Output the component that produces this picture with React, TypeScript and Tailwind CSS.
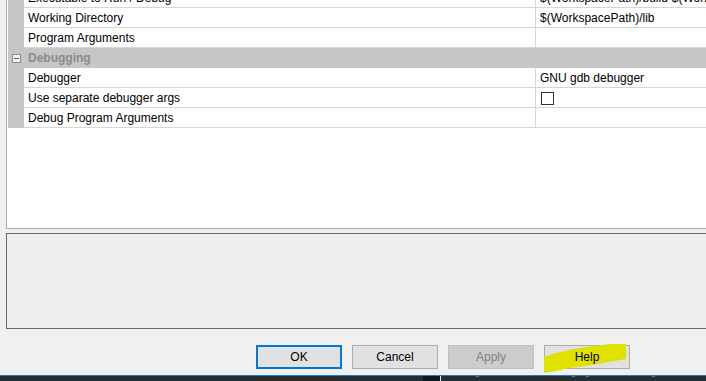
import React from 'react';

type Row =
  | { kind: 'prop'; name: string; value?: string; check?: boolean }
  | { kind: 'group'; name: string };

const rows: Row[] = [
  {
    kind: 'prop',
    name: 'Executable to Run / Debug',
    value: '$(WorkspacePath)/build-$(WorkspaceConfiguration)/bin/$(ProjectName)',
  },
  { kind: 'prop', name: 'Working Directory', value: '$(WorkspacePath)/lib' },
  { kind: 'prop', name: 'Program Arguments', value: '' },
  { kind: 'group', name: 'Debugging' },
  { kind: 'prop', name: 'Debugger', value: 'GNU gdb debugger' },
  { kind: 'prop', name: 'Use separate debugger args', check: true },
  { kind: 'prop', name: 'Debug Program Arguments', value: '' },
];

function GroupRow({ name }: { name: string }) {
  return (
    <div className="flex h-[20px] items-center bg-[#c6c6c6]">
      <div className="flex w-[16px] justify-center">
        <span className="flex h-[9px] w-[9px] items-center justify-center border border-[#8e8e8e] bg-[#f4f4f4]">
          <span className="h-px w-[5px] bg-[#5a5a5a]" />
        </span>
      </div>
      <span className="pl-[4px] font-bold text-[#8c8c8c]">{name}</span>
    </div>
  );
}

function PropRow({ row }: { row: Extract<Row, { kind: 'prop' }> }) {
  return (
    <div className="flex h-[20px]">
      <div className="w-[16px] shrink-0 bg-[#c6c6c6]" />
      <div className="flex w-[512px] shrink-0 items-center border-r border-b border-[#d6d6d6] pl-[4px] whitespace-nowrap">
        {row.name}
      </div>
      <div className="flex flex-1 items-center overflow-hidden border-b border-[#d6d6d6] pl-[4px] whitespace-nowrap">
        {row.check ? (
          <span className="mt-[2px] ml-px h-[13px] w-[13px] border border-[#333333] bg-white" />
        ) : (
          row.value
        )}
      </div>
    </div>
  );
}

function DlgButton({
  label,
  primary,
  disabled,
  marked,
}: {
  label: string;
  primary?: boolean;
  disabled?: boolean;
  marked?: boolean;
}) {
  return (
    <button
      type="button"
      className={[
        'relative flex h-[24px] w-[86px] items-center justify-center',
        primary
          ? 'border-2 border-[#0078d7] bg-[#e1e1e1] text-black'
          : disabled
            ? 'border border-[#bfbfbf] bg-[#cccccc] text-[#838383]'
            : 'border border-[#adadad] bg-[#e1e1e1] text-black',
      ].join(' ')}
    >
      {marked ? (
        // highlighter stroke, under the label
        <svg
          className="pointer-events-none absolute top-[-2px] left-[-1px]"
          width="84"
          height="30"
          viewBox="0 0 84 30"
        >
          <polygon
            points="0,13 12,9 25,6 42,3 59,1 67,0 82,0 82,15 59,19 42,22 25,24 12,27 0,29"
            fill="#e1e100"
          />
        </svg>
      ) : null}
      <span className="relative">{label}</span>
    </button>
  );
}

export default function App() {
  return (
    <div
      className="flex h-[381px] w-[706px] flex-col overflow-hidden bg-[#f0f0f0] text-[12px] text-black"
      style={{ fontFamily: '"Liberation Sans", Arial, sans-serif' }}
    >
      {/* property grid */}
      <div className="ml-[6px] h-[229px] shrink-0 overflow-hidden border-b border-l border-[#ababab] bg-white pl-px">
        <div className="-mt-[12px]">
          {rows.map((row) =>
            row.kind === 'group' ? (
              <GroupRow key={row.name} name={row.name} />
            ) : (
              <PropRow key={row.name} row={row} />
            ),
          )}
        </div>
      </div>

      {/* description panel */}
      <div className="mt-[4px] ml-[6px] h-[96px] shrink-0 border-y border-l border-[#6a6a6a] bg-[#efefef]" />

      {/* buttons */}
      <div className="mt-[16px] flex justify-end gap-[10px] pr-[76px]">
        <DlgButton label="OK" primary />
        <DlgButton label="Cancel" />
        <DlgButton label="Apply" disabled />
        <DlgButton label="Help" marked />
      </div>

      {/* taskbar edge */}
      <div className="mt-[6px] flex flex-1 flex-col">
        <div className="h-px bg-[#1a7ad0]" />
        <div className="flex flex-1 bg-[#272c30]">
          <div className="ml-[423px] w-[17px] bg-[#161616]" />
          <div className="w-px bg-[#e8e8e8]" />
          <div className="ml-[35px] h-px w-[3px] bg-[#6a7076]" />
          <div className="ml-[93px] h-px w-[3px] bg-[#6a7076]" />
          <div className="ml-[11px] h-px w-[3px] bg-[#6a7076]" />
          <div className="ml-[63px] h-px w-[3px] bg-[#6a7076]" />
        </div>
      </div>
    </div>
  );
}
